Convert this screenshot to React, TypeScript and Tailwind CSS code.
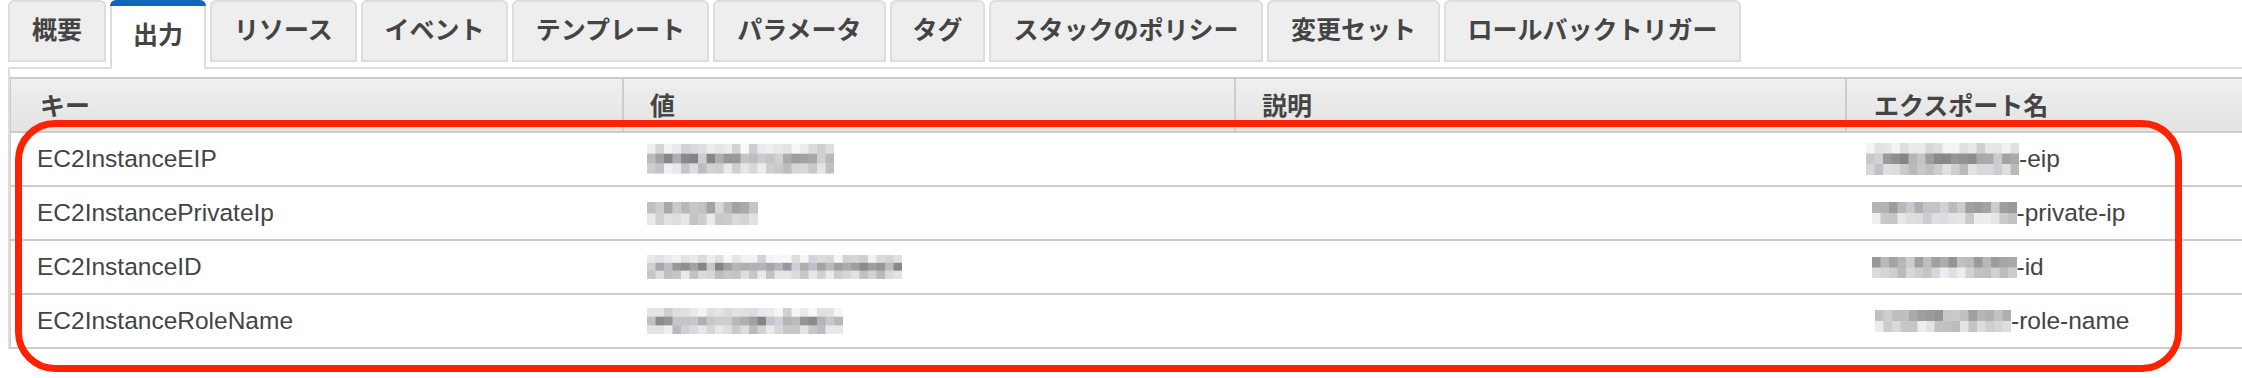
import React from 'react';

type Tab = { label: string; width: string; active?: boolean };

const tabs: Tab[] = [
  { label: '概要', width: 'w-[98px]' },
  { label: '出力', width: 'w-[96px]', active: true },
  { label: 'リソース', width: 'w-[147px]' },
  { label: 'イベント', width: 'w-[147px]' },
  { label: 'テンプレート', width: 'w-[197px]' },
  { label: 'パラメータ', width: 'w-[173px]' },
  { label: 'タグ', width: 'w-[95px]' },
  { label: 'スタックのポリシー', width: 'w-[274px]' },
  { label: '変更セット', width: 'w-[173px]' },
  { label: 'ロールバックトリガー', width: 'w-[297px]' },
];

// pixelated stand-in for the blurred values in the screenshot
function Mosaic({
  width,
  rows,
  bh,
  seed,
}: {
  width: number;
  rows: number;
  bh: number;
  seed: number;
}) {
  const bw = 8.5;
  const cols = Math.round(width / bw);
  let s = seed;
  const rand = () => {
    s = (s * 1103515245 + 12345) % 2147483648;
    return s / 2147483648;
  };
  // lightness range per block row: the middle row carries the "ink"
  const ranges =
    rows === 3
      ? [
          [205, 248],
          [130, 210],
          [185, 240],
        ]
      : [
          [145, 215],
          [185, 240],
        ];
  const rects: React.ReactNode[] = [];
  for (let r = 0; r < rows; r++) {
    const [lo, hi] = ranges[r];
    for (let c = 0; c < cols; c++) {
      const v = Math.round(lo + rand() * (hi - lo));
      const tint = rand() > 0.75 ? 6 : 0;
      rects.push(
        <rect
          key={`${r}-${c}`}
          x={c * bw}
          y={r * bh}
          width={bw + 0.5}
          height={bh + 0.5}
          fill={`rgb(${v},${v},${Math.min(255, v + tint)})`}
        />
      );
    }
  }
  return (
    <svg width={cols * bw} height={rows * bh} className="block shrink-0">
      {rects}
    </svg>
  );
}

const rowsData = [
  { key: 'EC2InstanceEIP', value: { w: 184, rows: 3, bh: 9.7 }, exp: { w: 150, rows: 3, bh: 10.5 }, pad: 'pl-[21px]', suffix: '-eip' },
  { key: 'EC2InstancePrivateIp', value: { w: 110, rows: 2, bh: 11.5 }, exp: { w: 148, rows: 2, bh: 11 }, pad: 'pl-[27px]', suffix: '-private-ip' },
  { key: 'EC2InstanceID', value: { w: 254, rows: 3, bh: 7.8 }, exp: { w: 148, rows: 2, bh: 10.5 }, pad: 'pl-[27px]', suffix: '-id' },
  { key: 'EC2InstanceRoleName', value: { w: 198, rows: 3, bh: 8.7 }, exp: { w: 140, rows: 2, bh: 11 }, pad: 'pl-[30px]', suffix: '-role-name' },
];

export default function App() {
  return (
    <div className="relative w-[2242px] h-[378px] overflow-hidden bg-white text-[#444444] font-['Liberation_Sans','Noto_Sans_CJK_JP',sans-serif]">
      {/* tab strip */}
      <div className="flex items-start gap-[4px] pl-[8px] h-[69px]">
        {tabs.map((t) =>
          t.active ? (
            <div
              key={t.label}
              className={`${t.width} relative z-10 h-[69px] shrink-0 bg-white border-x-2 border-[#dddddd] rounded-t-[6px] text-center`}
            >
              <div className="h-[6px] -mx-[2px] rounded-t-[6px] bg-[#1166bb]" />
              <div className="pt-[13px] text-[25px] leading-[28px] font-bold font-['Noto_Sans_CJK_JP',sans-serif]">
                {t.label}
              </div>
            </div>
          ) : (
            <div
              key={t.label}
              className={`${t.width} h-[62px] shrink-0 bg-[#eeeeee] border-2 border-[#dddddd] rounded-t-[6px] pt-[12px] text-center text-[25px] leading-[28px] font-bold font-['Noto_Sans_CJK_JP',sans-serif]`}
            >
              {t.label}
            </div>
          )
        )}
      </div>

      {/* panel */}
      <div className="-mt-[2px] ml-[8px] border-l-2 border-t-2 border-[#dddddd] pt-[8px]">
        <div className="border-l border-[#cccccc] w-[2450px]">
          {/* header */}
          <div className="grid grid-cols-[611px_612px_611px_611px] h-[56px] border-y-2 border-[#cccccc] bg-gradient-to-b from-[#efefef] to-[#e3e3e3] text-[25px] font-bold font-['Noto_Sans_CJK_JP',sans-serif]">
            <div className="flex items-center pl-[29px]">キー</div>
            <div className="flex items-center pl-[26px] border-l-2 border-[#cccccc]">値</div>
            <div className="flex items-center pl-[26px] border-l-2 border-[#cccccc]">説明</div>
            <div className="flex items-center pl-[27px] border-l-2 border-[#cccccc]">エクスポート名</div>
          </div>

          {/* rows */}
          {rowsData.map((r, i) => (
            <div
              key={r.key}
              className="grid grid-cols-[611px_612px_611px_611px] h-[54px] border-b-2 border-[#cccccc] text-[24.5px] leading-[28px]"
            >
              <div className="flex items-center pl-[26px]">{r.key}</div>
              <div className="flex items-center pl-[25px]">
                <Mosaic width={r.value.w} rows={r.value.rows} bh={r.value.bh} seed={17 + i * 31} />
              </div>
              <div />
              <div className={`flex items-center ${r.pad}`}>
                <Mosaic width={r.exp.w} rows={r.exp.rows} bh={r.exp.bh} seed={101 + i * 7} />
                <span>{r.suffix}</span>
              </div>
            </div>
          ))}
        </div>
      </div>

      {/* red annotation box drawn over the table */}
      <div className="absolute left-[15px] top-[120px] w-[2167px] h-[252px] border-[7px] border-[#ff2200] rounded-[40px] pointer-events-none" />
    </div>
  );
}
